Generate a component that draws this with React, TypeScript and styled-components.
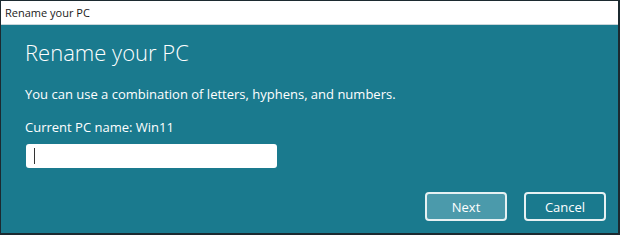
import React from 'react'
import styled, { createGlobalStyle } from 'styled-components'

const GlobalStyle = createGlobalStyle`
  html, body {
    margin: 0;
    padding: 0;
    background: #1c2a30;
  }
  body {
    font-family: 'Open Sans', 'Noto Sans', sans-serif;
  }
`

const Window = styled.div`
  width: 617px;
  height: 232px;
  margin: 1px 2px 2px 1px;
  display: flex;
  flex-direction: column;
  background: #1a7a8e;
`

const TitleBar = styled.div`
  height: 23px;
  flex: none;
  background: #ffffff;
  border-bottom: 1px solid #c9d6da;
  display: flex;
  align-items: center;
  padding-left: 4px;
  font-size: 11px;
  color: #1a1a1a;
`

const Body = styled.div`
  display: flex;
  flex-direction: column;
  padding: 12px 0 0 24px;
  color: #ffffff;
`

const Heading = styled.h1`
  margin: 0;
  font-size: 22px;
  font-weight: 300;
  line-height: 30px;
`

const Description = styled.p`
  margin: 18px 0 0;
  font-size: 13px;
  line-height: 18px;
`

const Label = styled.div`
  margin-top: 15px;
  font-size: 13px;
  line-height: 18px;
`

const NameInput = styled.div`
  margin: 8px 0 0 1px;
  width: 251px;
  height: 24px;
  background: #ffffff;
  border-radius: 3px;
  display: flex;
  align-items: center;
  padding-left: 8px;
  box-sizing: border-box;
`

const Caret = styled.span`
  width: 1px;
  height: 16px;
  background: #333;
`

const Footer = styled.div`
  margin-top: auto;
  display: flex;
  justify-content: flex-end;
  gap: 17px;
  padding: 0 12px 12px 0;
`

const Button = styled.button<{ $primary?: boolean }>`
  width: 82px;
  height: 29px;
  box-sizing: border-box;
  border: 2px solid #e6f1f3;
  border-radius: 4px;
  background: ${(p) => (p.$primary ? '#4b9aab' : 'transparent')};
  color: #ffffff;
  font-family: inherit;
  font-size: 13px;
  padding: 0;
`

export default function App() {
  return (
    <>
      <GlobalStyle />
      <Window>
        <TitleBar>Rename your PC</TitleBar>
        <Body>
          <Heading>Rename your PC</Heading>
          <Description>You can use a combination of letters, hyphens, and numbers.</Description>
          <Label>Current PC name: Win11</Label>
          <NameInput>
            <Caret />
          </NameInput>
        </Body>
        <Footer>
          <Button $primary>Next</Button>
          <Button>Cancel</Button>
        </Footer>
      </Window>
    </>
  )
}
